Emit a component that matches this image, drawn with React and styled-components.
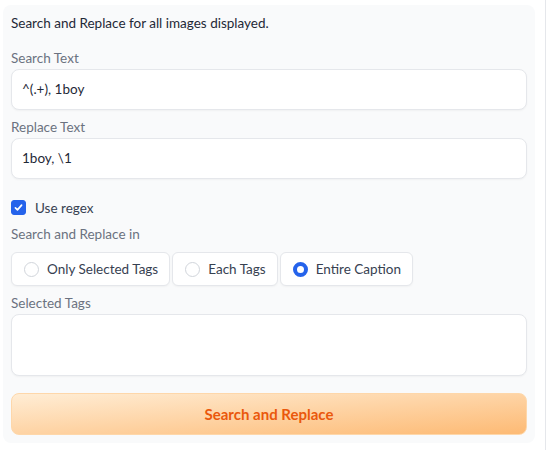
import React, { useState } from 'react';
import styled, { createGlobalStyle } from 'styled-components';

const GlobalStyle = createGlobalStyle`
    html, body {
        margin:0;
        padding:0;
        background:#ffffff;
        font-family:Lato, "Noto Sans", sans-serif;
    }
`

const Page = styled.div`
    position:relative;
    width:556px;
    height:450px;
    padding:5px 21px 0 3px;
    box-sizing:border-box;

    &::after {
        content:'';
        position:absolute;
        top:0;
        bottom:0;
        left:545px;
        width:1px;
        background:#e5e7eb;
    }
`

const Panel = styled.div`
    background:#f9fafb;
    border-radius:8px;
    padding:8px;
    display:flex;
    flex-direction:column;
    height:438px;
    box-sizing:border-box;
`

const Intro = styled.div`
    font-size:13.5px;
    color:#1f2937;
    line-height:20px;
`

const Label = styled.div`
    font-size:13.5px;
    color:#6b7280;
    line-height:20px;
    margin-top:${p => p.top || 0}px;
    margin-bottom:${p => p.bottom ?? 1}px;
`

const Input = styled.input`
    box-sizing:border-box;
    width:100%;
    height:41px;
    border:1px solid #e5e7eb;
    border-radius:8px;
    background:#fff;
    padding:0 10px;
    font-family:inherit;
    font-size:13.5px;
    color:#1f2937;
    box-shadow:0 1px 2px rgba(0,0,0,0.04);
    outline:none;
    display:block;
`

const TextArea = styled.textarea`
    box-sizing:border-box;
    width:100%;
    height:62px;
    border:1px solid #e5e7eb;
    border-radius:8px;
    background:#fff;
    padding:10px;
    font-family:inherit;
    font-size:13.5px;
    resize:none;
    display:block;
    outline:none;
    box-shadow:0 1px 2px rgba(0,0,0,0.04);
`

const CheckRow = styled.label`
    display:flex;
    align-items:center;
    gap:9px;
    height:20px;
    margin-top:19px;
    font-size:13.5px;
    color:#374151;
    cursor:pointer;
`

const CheckBox = styled.span`
    width:15px;
    height:15px;
    border-radius:3px;
    background:${p => p.checked ? '#2563eb' : '#fff'};
    border:1px solid ${p => p.checked ? '#2563eb' : '#d1d5db'};
    box-sizing:border-box;
    display:flex;
    align-items:center;
    justify-content:center;
`

const RadioGroup = styled.div`
    display:flex;
    gap:2px;
`

const RadioItem = styled.label`
    display:flex;
    align-items:center;
    gap:8px;
    height:34px;
    box-sizing:border-box;
    padding:0 11px 0 12px;
    border:1px solid #e5e7eb;
    border-radius:6px;
    background:#fff;
    font-size:13.5px;
    color:#374151;
    cursor:pointer;
    box-shadow:0 1px 2px rgba(0,0,0,0.04);
`

const RadioDot = styled.span`
    width:15px;
    height:15px;
    border-radius:50%;
    box-sizing:border-box;
    border:${p => p.active ? '4.5px solid #2563eb' : '1px solid #d1d5db'};
    background:#fff;
`

const Button = styled.button`
    margin-top:17px;
    height:42px;
    width:100%;
    border:1px solid #fed7aa;
    border-radius:8px;
    background:linear-gradient(to bottom right, #ffedd5, #fdba74);
    color:#ea580c;
    font-family:inherit;
    font-size:15px;
    font-weight:700;
    cursor:pointer;
`

const options = ['Only Selected Tags', 'Each Tags', 'Entire Caption']

const App = () => {
    const [search, setSearch] = useState('^(.+), 1boy');
    const [replace, setReplace] = useState('1boy, \\1');
    const [regex, setRegex] = useState(true);
    const [mode, setMode] = useState('Entire Caption');
    const [tags, setTags] = useState('');

    return (
        <>
        <GlobalStyle/>
        <Page>
            <Panel>
                <Intro>Search and Replace for all images displayed.</Intro>
                <Label top={15}>Search Text</Label>
                <Input value={search} onChange={e => setSearch(e.target.value)}/>
                <Label top={7}>Replace Text</Label>
                <Input value={replace} onChange={e => setReplace(e.target.value)}/>
                <CheckRow onClick={() => setRegex(!regex)}>
                    <CheckBox checked={regex}>
                        {regex ? <svg width="11" height="11" viewBox="0 0 16 16"><path d="M3.5 8.5l3 3 6-7" fill="none" stroke="#fff" strokeWidth="2.4" strokeLinecap="round" strokeLinejoin="round"/></svg> : null}
                    </CheckBox>
                    Use regex
                </CheckRow>
                <Label top={7} bottom={8}>Search and Replace in</Label>
                <RadioGroup>
                    {options.map(opt => (
                        <RadioItem key={opt} onClick={() => setMode(opt)}>
                            <RadioDot active={mode === opt}/>
                            {opt}
                        </RadioItem>
                    ))}
                </RadioGroup>
                <Label top={7}>Selected Tags</Label>
                <TextArea value={tags} onChange={e => setTags(e.target.value)}/>
                <Button>Search and Replace</Button>
            </Panel>
        </Page>
        </>
    )
}

export default App;
